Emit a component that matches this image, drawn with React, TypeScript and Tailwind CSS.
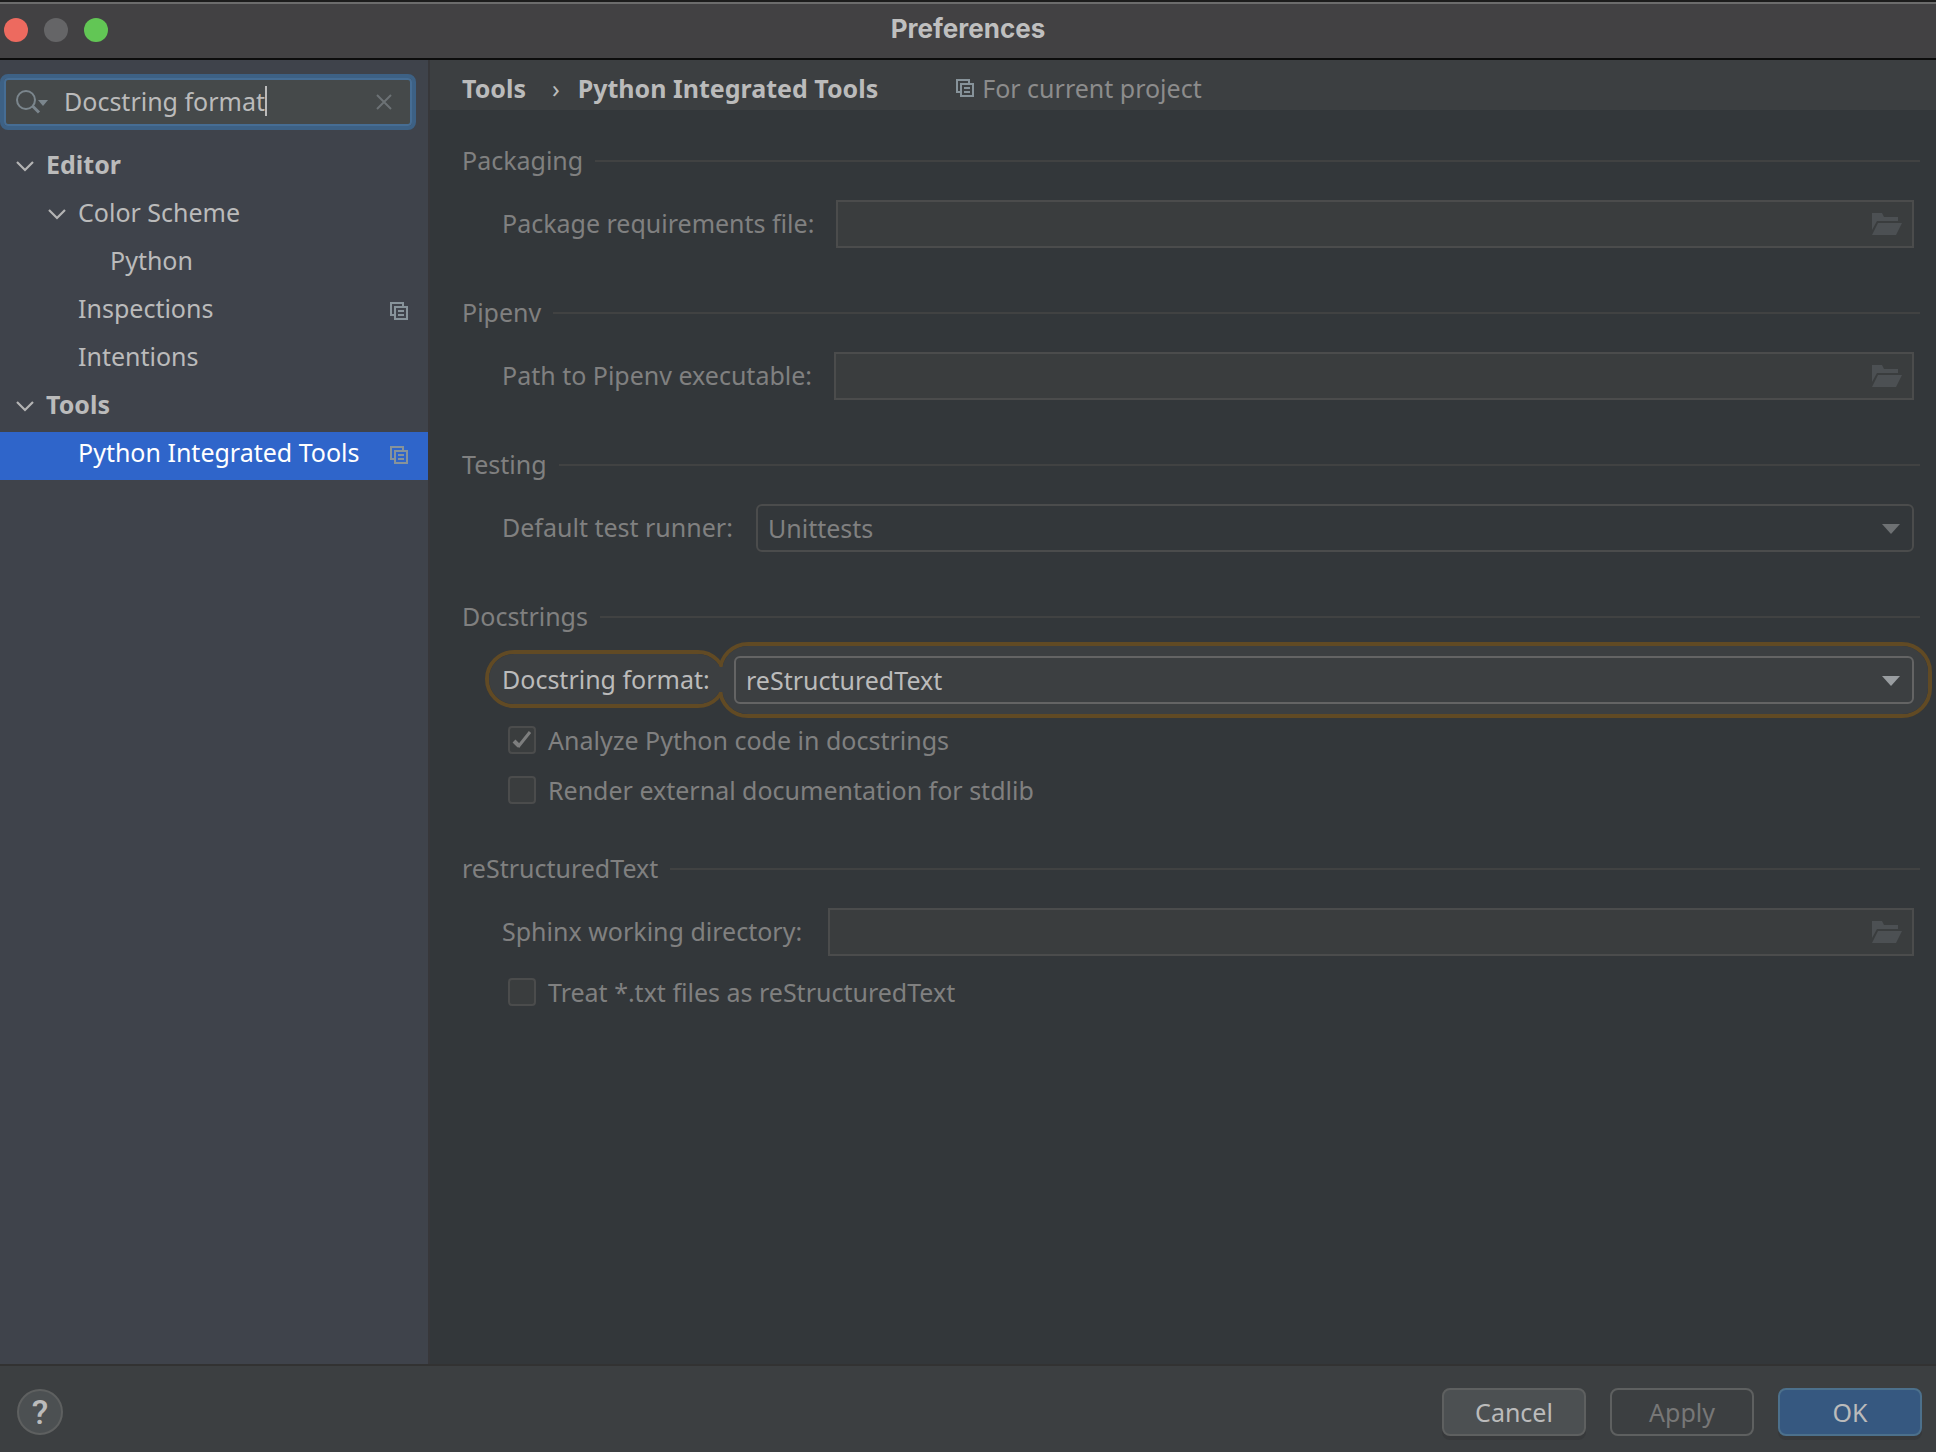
import React from "react";

interface IconProps {
  className?: string;
}

const ChevronIcon: React.FC<IconProps> = ({ className }) => (
  <svg className={className} width="18" height="12" viewBox="0 0 18 12" fill="none" stroke="#b4b4b4" strokeWidth="2.2">
    <path d="M1 1 L9 9 L17 1" />
  </svg>
);

const ProjectIcon: React.FC<IconProps> = ({ className }) => (
  <svg className={className} width="18" height="18" viewBox="0 0 18 18" fill="none" stroke="currentColor" strokeWidth="2">
    <path d="M4 13 H1 V1 H13 V4" />
    <path d="M5 5 H17 V17 H5 Z" />
    <path d="M8 9 H14 M8 13 H14" />
  </svg>
);

const FolderIcon = () => (
  <svg width="30" height="22" viewBox="0 0 30 22" fill="#4c5053">
    <path d="M0 0 H10 L12 4 H26 V8 H5 L0 17 Z" />
    <path d="M6 10 H30 L24 22 H0 Z" />
  </svg>
);

const SearchIcon = () => (
  <svg width="32" height="24" viewBox="0 0 32 24" fill="none">
    <circle cx="10" cy="10" r="9" stroke="#7b868d" strokeWidth="2" />
    <path d="M16.500 16 L23 22.500" stroke="#7b868d" strokeWidth="3" />
    <path d="M22 10 H32 L27 16 Z" fill="#7b868d" />
  </svg>
);

interface TreeItem {
  label: string;
  indent: string;
  parent?: boolean;
  bold?: boolean;
  project?: boolean;
  selected?: boolean;
}

const treeItems: TreeItem[] = [
  { label: "Editor", indent: "pl-4", parent: true, bold: true },
  { label: "Color Scheme", indent: "pl-12", parent: true },
  { label: "Python", indent: "pl-[110px]" },
  { label: "Inspections", indent: "pl-[78px]", project: true },
  { label: "Intentions", indent: "pl-[78px]" },
  { label: "Tools", indent: "pl-4", parent: true, bold: true },
  { label: "Python Integrated Tools", indent: "pl-[78px]", project: true, selected: true },
];

const Tree = () => (
  <ul className="mt-[14px]">
    {treeItems.map((item) => (
      <li
        key={item.label}
        className={`flex h-12 items-center pr-5 pb-[2px] ${item.indent} ${item.selected ? "bg-[#2f65ca] text-white" : ""}`}
      >
        {item.parent && <ChevronIcon className="mr-3" />}
        <span className={`pb-[6px] ${item.bold ? "font-bold" : ""}`}>{item.label}</span>
        {item.project && <ProjectIcon className="ml-auto text-[#87939a]" />}
      </li>
    ))}
  </ul>
);

interface SectionProps {
  title: string;
  children: React.ReactNode;
}

const Section: React.FC<SectionProps> = ({ title, children }) => (
  <section>
    <div className="flex h-[30px] items-center gap-3">
      <h2 className="pb-[2px]">{title}</h2>
      <div className="h-[2px] flex-1 bg-[#414242]" />
    </div>
    <div className="pt-6 pr-[6px] pl-10">{children}</div>
  </section>
);

interface FieldProps {
  id: string;
  label: string;
  labelWidth: string;
}

const PathField: React.FC<FieldProps> = ({ id, label, labelWidth }) => (
  <div className="flex h-12 items-center">
    <label htmlFor={id} className={`shrink-0 pb-[2px] ${labelWidth}`}>
      {label}
    </label>
    <div className="flex h-12 flex-1 items-center border-2 border-[#4b4c4c] bg-[#3a3d3e] pr-[10px]">
      <input id={id} type="text" disabled className="h-full min-w-0 flex-1 bg-transparent px-2 outline-none" />
      <FolderIcon />
    </div>
  </div>
);

interface SelectFieldProps extends FieldProps {
  value: string;
  active?: boolean;
}

const SelectField: React.FC<SelectFieldProps> = ({ id, label, labelWidth, value, active }) => (
  <div className={`relative flex h-12 items-center ${active ? "text-[#bbbbbb]" : ""}`}>
    {active && (
      <>
        {/* search match highlight: outlines first, then fills so both shapes merge */}
        <div className="absolute -top-[6px] -left-[17px] h-[58px] w-[242px] rounded-full border-4 border-[#614a24]" />
        <div className="absolute -top-[14px] -right-[18px] -bottom-[14px] left-[216px] rounded-[30px] border-4 border-[#614a24]" />
        <div className="absolute -top-[2px] -left-[13px] h-[50px] w-[234px] rounded-full bg-[#3c3f41]" />
        <div className="absolute -top-[10px] -right-[14px] -bottom-[10px] left-[220px] rounded-[26px] bg-[#3c3f41]" />
        <div className="absolute top-[11px] left-[214px] h-[25px] w-[10px] bg-[#3c3f41]" />
      </>
    )}
    <label htmlFor={id} className={`relative shrink-0 pb-[2px] ${labelWidth}`}>
      {label}
    </label>
    <div className="relative h-12 flex-1">
      <select
        id={id}
        disabled={!active}
        className={`h-full w-full appearance-none rounded-md border-2 bg-transparent px-[10px] opacity-100 outline-none ${
          active ? "border-[#646464]" : "border-[#4b4c4c]"
        }`}
      >
        <option>{value}</option>
      </select>
      <svg
        className={`pointer-events-none absolute top-5 right-[14px] ${active ? "text-[#999da0]" : "text-[#6e7173]"}`}
        width="18"
        height="10"
        viewBox="0 0 18 10"
        fill="currentColor"
      >
        <path d="M0 0 H18 L9 10 Z" />
      </svg>
    </div>
  </div>
);

interface CheckFieldProps {
  label: string;
  checked?: boolean;
}

const CheckField: React.FC<CheckFieldProps> = ({ label, checked }) => (
  <label className="flex h-7 items-center gap-3 pl-[6px]">
    <span className="relative h-7 w-7">
      <input
        type="checkbox"
        disabled
        defaultChecked={checked}
        className="block h-7 w-7 appearance-none rounded-[4px] border-2 border-[#4b4c4c] bg-[#3a3d3e]"
      />
      {checked && (
        <svg className="absolute inset-0" width="28" height="28" viewBox="0 0 28 28" fill="none" stroke="#7d7e7e">
          <path d="M6 15 L11 20" strokeWidth="4" />
          <path d="M10 21 L22 6" strokeWidth="3" />
        </svg>
      )}
    </span>
    <span>{label}</span>
  </label>
);

const Sidebar = () => (
  <aside className="w-[430px] shrink-0 border-r-2 border-[#37373a] bg-[#3f434b] pt-[14px]">
    <div className="mr-3 flex h-14 items-center rounded-lg border-4 border-[#3d6185]">
      <div className="flex h-12 flex-1 items-center rounded-[4px] border-2 border-[#466d94] bg-[#45494a] pr-[18px] pl-[10px]">
        <SearchIcon />
        <div className="flex min-w-0 flex-1 items-center pb-[2px] pl-4">
          <input
            type="text"
            aria-label="Search preferences"
            defaultValue="Docstring format"
            className="w-[201px] bg-transparent outline-none"
          />
          <div className="h-[30px] w-[2px] bg-[#bbbbbb]" />
        </div>
        <button type="button" aria-label="Clear">
          <svg width="16" height="16" viewBox="0 0 16 16" stroke="#6c7275" strokeWidth="2">
            <path d="M1 1 L15 15 M15 1 L1 15" />
          </svg>
        </button>
      </div>
    </div>
    <Tree />
  </aside>
);

const App = () => {
  return (
    <div className="flex min-h-screen flex-col bg-[#33373a] font-['Noto_Sans',sans-serif] text-[25px] leading-8 text-[#bbbbbb]">
      <header className="relative flex h-[60px] items-center justify-center border-t-2 border-b-2 border-t-[#1c1c1c] border-b-[#0c0c0c] bg-[#424143] shadow-[inset_0_2px_0_#6c6c6c]">
        <div className="absolute left-1 flex gap-4">
          <span className="h-6 w-6 rounded-full bg-[#ed6a5f]" />
          <span className="h-6 w-6 rounded-full bg-[#656567]" />
          <span className="h-6 w-6 rounded-full bg-[#62c655]" />
        </div>
        <h1 className="pb-[2px] font-['Inter',sans-serif] text-[26px] font-bold text-[#bfbfbf]">Preferences</h1>
      </header>

      <div className="flex flex-1">
        <Sidebar />
        <main className="min-w-0 flex-1">
          <div className="flex h-[50px] items-center bg-[#3c3f41] pt-[6px] pl-8">
            <nav className="flex items-center font-bold">
              <a href="#tools">Tools</a>
              <span className="pr-[18px] pl-[26px] font-normal">›</span>
              <a href="#python">Python Integrated Tools</a>
            </nav>
            <div className="ml-[78px] flex items-center gap-2 text-[#8c8c8c]">
              <ProjectIcon className="text-[#87939a]" />
              <span>For current project</span>
            </div>
          </div>

          <div className="flex flex-col gap-[50px] py-9 pr-4 pl-8 text-[#808080]">
            <Section title="Packaging">
              <PathField id="requirements" label="Package requirements file:" labelWidth="w-[334px]" />
            </Section>
            <Section title="Pipenv">
              <PathField id="pipenv" label="Path to Pipenv executable:" labelWidth="w-[332px]" />
            </Section>
            <Section title="Testing">
              <SelectField id="runner" label="Default test runner:" labelWidth="w-[254px]" value="Unittests" />
            </Section>
            <Section title="Docstrings">
              <SelectField id="format" label="Docstring format:" labelWidth="w-[232px]" value="reStructuredText" active />
              <div className="flex flex-col gap-[22px] pt-[22px]">
                <CheckField label="Analyze Python code in docstrings" checked />
                <CheckField label="Render external documentation for stdlib" />
              </div>
            </Section>
            <Section title="reStructuredText">
              <PathField id="sphinx" label="Sphinx working directory:" labelWidth="w-[326px]" />
              <div className="pt-[22px]">
                <CheckField label="Treat *.txt files as reStructuredText" />
              </div>
            </Section>
          </div>
        </main>
      </div>

      <footer className="flex h-[88px] items-center border-t-2 border-[#323232] bg-[#3c3f41] pt-[6px] pr-[14px] pl-[17px]">
        <button
          type="button"
          aria-label="Help"
          className="h-[46px] w-[46px] rounded-full border-2 border-[#5e6060] bg-[#4c5052] font-['Roboto',sans-serif] text-[34px] font-medium"
        >
          ?
        </button>
        <div className="ml-auto flex gap-6">
          <button type="button" className="h-12 w-36 rounded-lg border-2 border-[#5e6060] bg-[#4c5052] shadow-[0_4px_0_#37393b]">
            Cancel
          </button>
          <button type="button" disabled className="h-12 w-36 rounded-lg border-2 border-[#5e6060] text-[#777777]">
            Apply
          </button>
          <button type="button" className="h-12 w-36 rounded-lg border-2 border-[#4c708c] bg-[#365880] shadow-[0_4px_0_#37393b]">
            OK
          </button>
        </div>
      </footer>
    </div>
  );
};

export default App;
